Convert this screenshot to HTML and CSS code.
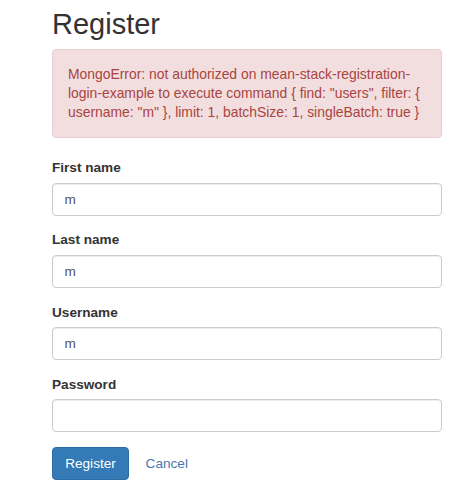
FILE: index.html
```html
<!DOCTYPE html>
<html lang="en">
<head>
<meta charset="utf-8">
<title>Register</title>
<link rel="stylesheet" href="styles.css">
</head>
<body>
<div class="page">
  <h2 class="title">Register</h2>
  <div class="alert">MongoError: not authorized on mean-stack-registration-login-example to execute command { find: "users", filter: { username: "m" }, limit: 1, batchSize: 1, singleBatch: true }</div>
  <form class="form">
    <div class="group">
      <label class="label" for="fn">First name</label>
      <input class="input" id="fn" type="text" value="m">
    </div>
    <div class="group">
      <label class="label" for="ln">Last name</label>
      <input class="input" id="ln" type="text" value="m">
    </div>
    <div class="group">
      <label class="label" for="un">Username</label>
      <input class="input" id="un" type="text" value="m">
    </div>
    <div class="group">
      <label class="label" for="pw">Password</label>
      <input class="input" id="pw" type="password" value="">
    </div>
    <div class="actions">
      <button class="btn btn-primary" type="button">Register</button>
      <a class="btn btn-link" href="#">Cancel</a>
    </div>
  </form>
</div>
</body>
</html>
```

FILE: styles.css
```css
html, body {
  margin: 0;
  padding: 0;
  background: #fff;
}

body {
  font-family: "Liberation Sans", Arial, Helvetica, sans-serif;
  font-size: 13.6px;
  line-height: 19.4px;
  color: #333;
}

.page {
  width: 390px;
  padding-left: 52px;
  padding-top: 8px;
}

.title {
  margin: 0 0 9px 0;
  font-size: 29px;
  line-height: 32px;
  font-weight: 500;
  color: #333;
}

.alert {
  box-sizing: border-box;
  width: 390px;
  padding: 14.5px 10px 14.5px 15px;
  margin-bottom: 20px;
  background: #f2dede;
  border: 1px solid #ebccd1;
  border-radius: 4px;
  color: #a94442;
  font-size: 13.9px;
}

.form {
  margin: 0;
}

.group {
  display: flex;
  flex-direction: column;
  margin-bottom: 14.8px;
}

.label {
  font-weight: bold;
  margin-bottom: 5px;
  color: #333;
}

.input {
  box-sizing: border-box;
  width: 390px;
  height: 33px;
  margin: 0;
  padding: 6px 11.6px;
  font-family: inherit;
  font-size: 13.6px;
  line-height: 19.4px;
  color: #555;
  -webkit-text-fill-color: #555;
  background: #fff;
  border: 1px solid #ccc;
  border-radius: 4px;
  box-shadow: inset 0 1px 1px rgba(0, 0, 0, .075);
  outline: none;
}

.actions {
  display: flex;
  align-items: center;
  gap: 4px;
}

.btn {
  box-sizing: border-box;
  display: inline-block;
  height: 33px;
  padding: 6px 11.6px;
  font-family: inherit;
  font-size: 13.6px;
  line-height: 19.4px;
  border: 1px solid transparent;
  border-radius: 4px;
  text-decoration: none;
  cursor: pointer;
}

.btn-primary {
  width: 77px;
  color: #fff;
  background: #337ab7;
  border-color: #2e6da4;
}

.btn-link {
  color: #4a77ad;
  background: transparent;
}
```
